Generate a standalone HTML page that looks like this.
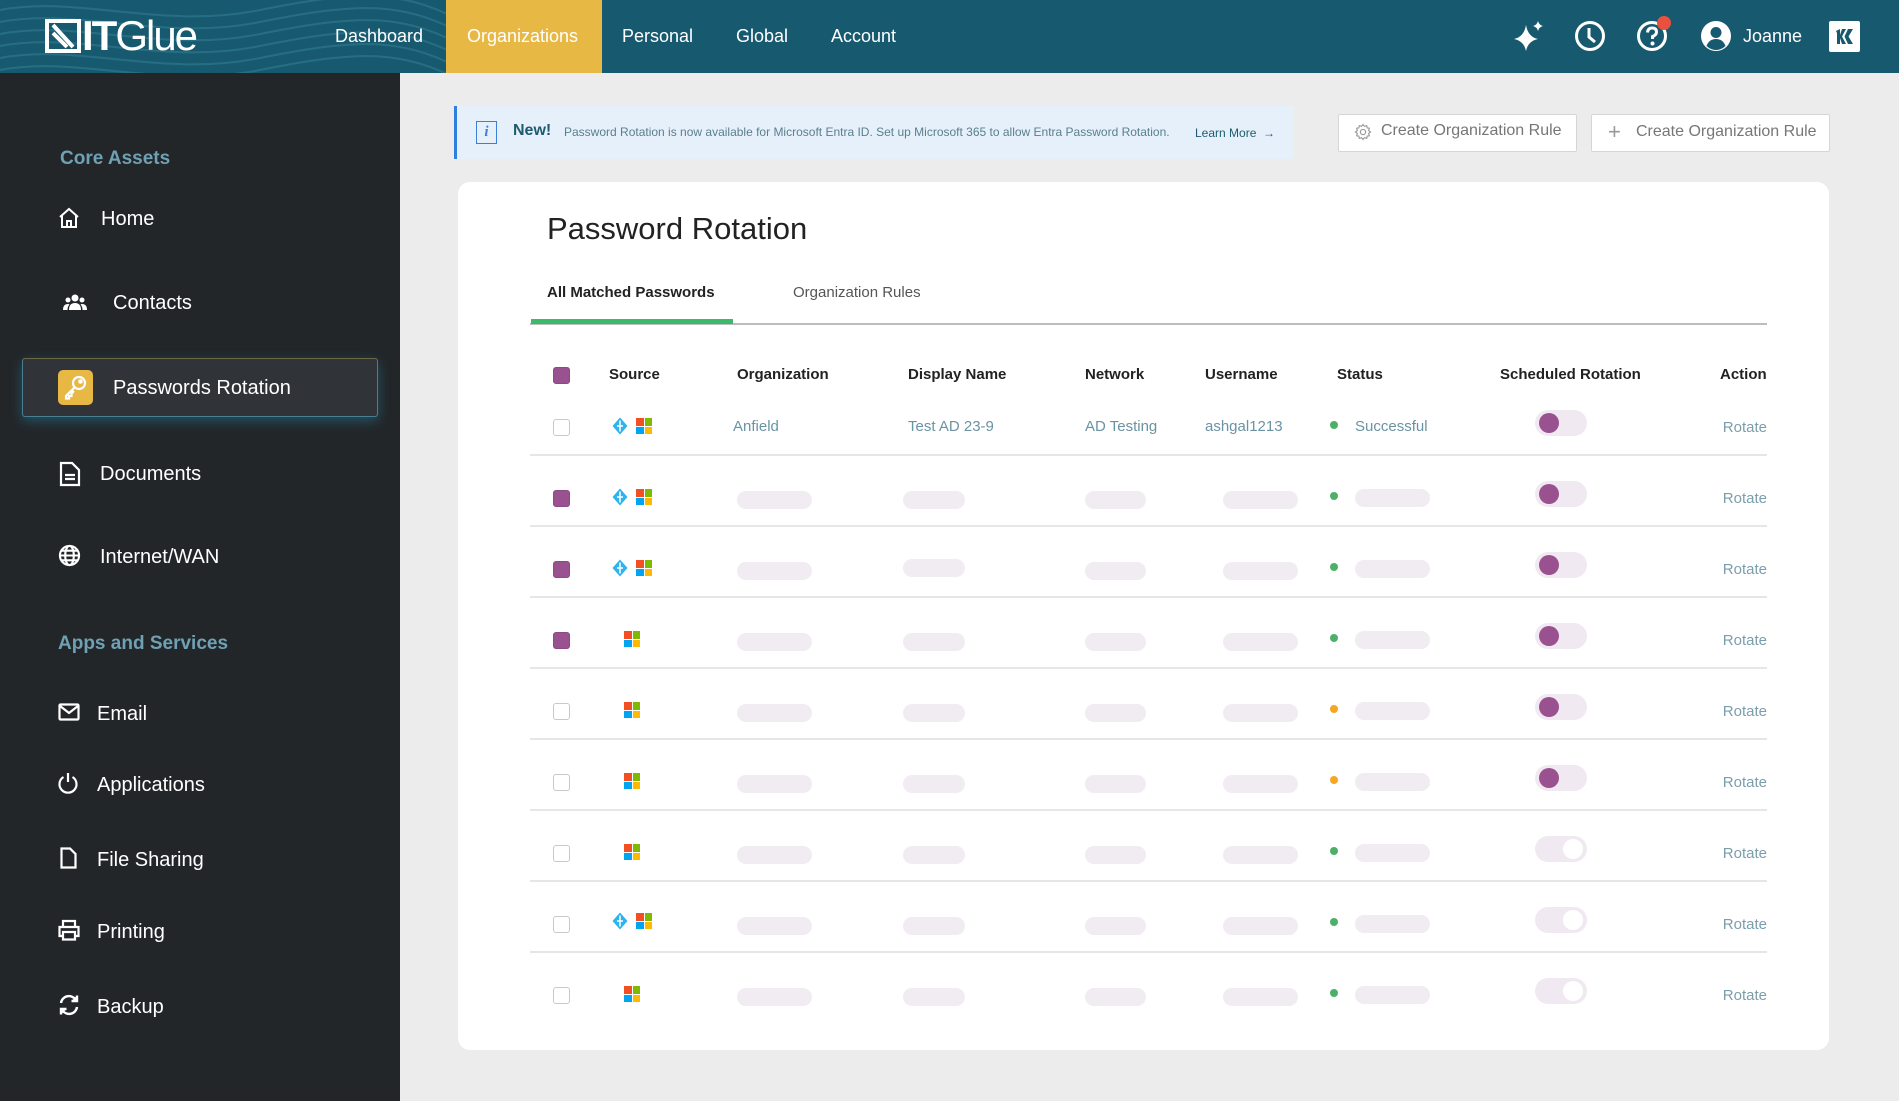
<!DOCTYPE html>
<html><head><meta charset="utf-8">
<style>
*{margin:0;padding:0;box-sizing:border-box}
body{width:1899px;height:1101px;overflow:hidden;background:#ececec;font-family:"Liberation Sans",sans-serif;position:relative}
.a{position:absolute}
.hdr{left:0;top:0;width:1899px;height:73px;background:#175a70}
.nav{top:0;height:73px;line-height:73px;color:#fff;font-size:18px}
.side{left:0;top:73px;width:400px;height:1028px;background:#222629}
.si{color:#fff;font-size:20px;line-height:24px}
.sh{color:#6fa0b4;font-size:19px;font-weight:bold;line-height:24px}
.ico{position:absolute}
.card{left:458px;top:182px;width:1371px;height:868px;background:#fff;border-radius:12px}
.th{top:365px;font-size:15px;font-weight:bold;color:#222;line-height:20px}
.row{position:absolute;left:0;width:1899px;height:1px}
.cb{position:absolute;left:553px;width:17px;height:17px;border-radius:3px;margin-top:-8px}
.cb.on{background:#9a5190;border:1px solid #8c4a84}
.cb.off{background:#fff;border:1.5px solid #c9c9c9}
.pill{position:absolute;height:18px;border-radius:9px;background:#f1ecf2;margin-top:-7px}
.dot{position:absolute;left:1330px;width:8px;height:8px;border-radius:50%;margin-top:-6px}
.tg{position:absolute;left:1535px;width:52px;height:26px;border-radius:13px;background:#f1e9f1;margin-top:-17px}
.tg i{position:absolute;left:4px;top:3px;width:20px;height:20px;border-radius:50%;background:#9a5190}
.tg.off i{left:28px;background:#fff}
.rot{position:absolute;right:132px;color:#7b9eab;font-size:15px;margin-top:-9px;line-height:20px}
.sep{position:absolute;left:530px;width:1237px;height:1.5px;background:#e6e6e6}
.txt{position:absolute;color:#6a93a3;font-size:15px;margin-top:-10px;line-height:20px}
.ms{position:absolute;width:16px;height:16px;margin-top:-9px}
.ms b{position:absolute;width:7.5px;height:7.5px}
.ad{position:absolute;width:16px;height:18px;margin-top:-10px}
</style></head><body>

<div class="a hdr">
<svg class="a" style="left:0;top:0" width="460" height="73">
<g fill="none" stroke="#2b7389" stroke-width="2" opacity=".8">
<path d="M0 10 C80 -5 160 30 260 10 S400 -10 460 20"/>
<path d="M0 22 C80 7 160 42 260 22 S400 2 460 32"/>
<path d="M0 34 C80 19 160 54 260 34 S400 14 460 44"/>
<path d="M0 46 C80 31 160 66 260 46 S400 26 460 56"/>
<path d="M0 58 C80 43 160 78 260 58 S400 38 460 68"/>
<path d="M0 70 C80 55 160 90 260 70 S400 50 460 80"/>
</g></svg>
<svg class="a" style="left:45px;top:19px" width="36" height="34" viewBox="0 0 36 34"><rect x="2" y="2" width="32" height="30" fill="none" stroke="#fff" stroke-width="4"/><path d="M8 6 L28 28 M8 14 L22 28" stroke="#fff" stroke-width="4"/></svg>
<div class="a" style="left:82px;top:10px;color:#fff;font-family:'Liberation Sans Narrow','Liberation Sans',sans-serif;font-size:42px;line-height:52px;letter-spacing:-2px"><b>IT</b>Glue</div>
<div class="a" style="left:446px;top:0;width:156px;height:73px;background:#e8b844"></div>
<div class="a nav" style="left:335px">Dashboard</div>
<div class="a nav" style="left:467px">Organizations</div>
<div class="a nav" style="left:622px">Personal</div>
<div class="a nav" style="left:736px">Global</div>
<div class="a nav" style="left:831px">Account</div>
<svg class="a" style="left:1513px;top:20px" width="32" height="32" viewBox="0 0 32 32"><path d="M13 5 Q15 17 25 19 Q15 21 13 31 Q11 21 1 19 Q11 17 13 5Z" fill="#fff"/><path d="M25 1 Q26 5 30 6 Q26 7 25 11 Q24 7 20 6 Q24 5 25 1Z" fill="#fff"/></svg>
<svg class="a" style="left:1574px;top:20px" width="32" height="32" viewBox="0 0 32 32"><circle cx="16" cy="16" r="13.5" fill="none" stroke="#fff" stroke-width="3"/><path d="M15 8 V17 L21 22" fill="none" stroke="#fff" stroke-width="3"/></svg>
<svg class="a" style="left:1636px;top:20px" width="32" height="32" viewBox="0 0 32 32"><circle cx="16" cy="16" r="13.5" fill="none" stroke="#fff" stroke-width="3"/><path d="M11.5 12.5 Q12 8 16 8 Q20.5 8 20.5 12 Q20.5 15 16.5 16.5 V19" fill="none" stroke="#fff" stroke-width="3"/><circle cx="16.5" cy="23.5" r="2" fill="#fff"/></svg>
<div class="a" style="left:1657px;top:16px;width:14px;height:14px;border-radius:50%;background:#e8513e"></div>
<svg class="a" style="left:1700px;top:20px" width="32" height="32" viewBox="0 0 32 32"><circle cx="16" cy="16" r="15" fill="#fff"/><circle cx="16" cy="12.5" r="5.5" fill="#175a70"/><path d="M6.5 26 Q9 19 16 19 Q23 19 25.5 26 Q21 30 16 30 Q11 30 6.5 26Z" fill="#175a70"/></svg>
<div class="a nav" style="left:1743px">Joanne</div>
<div class="a" style="left:1829px;top:21px;width:31px;height:31px;background:#fff;border-radius:2px"><svg width="31" height="31" viewBox="0 0 31 31"><path d="M7 10 L11 8 V23 H8 V12Z M13 8 H17 L13 15.5 L17 23 H13 L10.5 15.5Z M19 8 H24 L19.5 15.5 L24 23 H19 L15.5 15.5Z" fill="#175a70"/></svg></div>
</div>

<div class="a side">
<div class="a sh" style="left:60px;top:74px">Core Assets</div>
<svg class="ico" style="left:57px;top:133px" width="24" height="24" viewBox="0 0 24 24" fill="none" stroke="#fff" stroke-width="2"><path d="M3 11 L12 3 L21 11 M5 9.5 V21 H19 V9.5 M10 21 V15 H14 V21"/></svg>
<div class="a si" style="left:101px;top:134px">Home</div>
<svg class="ico" style="left:63px;top:220px" width="24" height="20" viewBox="0 0 24 20" fill="#fff"><circle cx="12" cy="5" r="3.5"/><circle cx="5" cy="7" r="2.5"/><circle cx="19" cy="7" r="2.5"/><path d="M6 17 Q6 10 12 10 Q18 10 18 17Z M0 17 Q0 11 5 11 Q6 11 6.5 11.5 Q4.5 13.5 4.5 17Z M24 17 Q24 11 19 11 Q18 11 17.5 11.5 Q19.5 13.5 19.5 17Z"/></svg>
<div class="a si" style="left:113px;top:218px">Contacts</div>
<div class="a" style="left:22px;top:285px;width:356px;height:59px;background:#303438;border:1.5px solid #4a7f93;border-top-color:#6c6a45;border-radius:3px;box-shadow:0 4px 12px rgba(40,140,170,.45)"></div>
<div class="a" style="left:58px;top:297px;width:35px;height:35px;border-radius:5px;background:#e8b844"><svg width="35" height="35" viewBox="0 0 35 35" fill="none" stroke="#fff" stroke-width="2.2"><circle cx="21" cy="13" r="6"/><circle cx="22.5" cy="11.5" r="1.2" fill="#fff"/><path d="M16.5 17.5 L8 26 V28.5 H11 V26 H13.5 V23.5 L16 21"/></svg></div>
<div class="a si" style="left:113px;top:303px">Passwords Rotation</div>
<svg class="ico" style="left:59px;top:388px" width="22" height="26" viewBox="0 0 22 26" fill="none" stroke="#fff" stroke-width="2.2"><path d="M2 2 H13 L20 9 V24 H2Z M6 14 H16 M6 18 H16"/></svg>
<div class="a si" style="left:100px;top:389px">Documents</div>
<svg class="ico" style="left:58px;top:471px" width="23" height="23" viewBox="0 0 24 24" fill="none" stroke="#fff" stroke-width="2.2"><circle cx="12" cy="12" r="10"/><ellipse cx="12" cy="12" rx="4.5" ry="10"/><path d="M2 12 H22 M3.5 7 H20.5 M3.5 17 H20.5"/></svg>
<div class="a si" style="left:100px;top:472px">Internet/WAN</div>
<div class="a sh" style="left:58px;top:559px">Apps and Services</div>
<svg class="ico" style="left:58px;top:630px" width="22" height="18" viewBox="0 0 22 18" fill="none" stroke="#fff" stroke-width="2.2"><rect x="1.5" y="1.5" width="19" height="15" rx="1"/><path d="M2 3 L11 10 L20 3"/></svg>
<div class="a si" style="left:97px;top:629px">Email</div>
<svg class="ico" style="left:57px;top:699px" width="22" height="22" viewBox="0 0 22 22" fill="none" stroke="#fff" stroke-width="2.2"><path d="M6.5 5 A8.5 8.5 0 1 0 15.5 5 M11 1 V10"/></svg>
<div class="a si" style="left:97px;top:700px">Applications</div>
<svg class="ico" style="left:60px;top:774px" width="17" height="22" viewBox="0 0 17 22" fill="none" stroke="#fff" stroke-width="2.2"><path d="M1.5 1.5 H10 L15.5 7 V20.5 H1.5Z"/></svg>
<div class="a si" style="left:97px;top:775px">File Sharing</div>
<svg class="ico" style="left:58px;top:846px" width="22" height="22" viewBox="0 0 22 22" fill="none" stroke="#fff" stroke-width="2.2"><path d="M5 7 V2 H17 V7 M4 17 H1.5 V8 H20.5 V17 H18 M5 13 H17 V20.5 H5Z"/></svg>
<div class="a si" style="left:97px;top:847px">Printing</div>
<svg class="ico" style="left:58px;top:921px" width="22" height="22" viewBox="0 0 22 22" fill="none" stroke="#fff" stroke-width="2.4"><path d="M3 9 A8 8 0 0 1 17.5 5.5 M19 13 A8 8 0 0 1 4.5 16.5"/><path d="M19 1.5 V7 H13.5 M3 20.5 V15 H8.5" fill="#fff"/></svg>
<div class="a si" style="left:97px;top:922px">Backup</div>
</div>

<div class="a" style="left:454px;top:106px;width:840px;height:53px;background:#e6f0fb;border-left:3px solid #2f7fe0"></div>
<div class="a" style="left:476px;top:121px;width:21px;height:23px;border:1.5px solid #3b7fd8;color:#3b7fd8;font:italic bold 15px 'Liberation Serif',serif;text-align:center;line-height:20px">i</div>
<div class="a" style="left:513px;top:122px;color:#1f5a6e;font-size:16px;font-weight:bold">New!</div>
<div class="a" style="left:564px;top:125px;color:#5a7f8e;font-size:12px">Password Rotation is now available for Microsoft Entra ID. Set up Microsoft 365 to allow Entra Password Rotation.</div>
<div class="a" style="left:1195px;top:126px;color:#1f5a6e;font-size:12px">Learn More &nbsp;&rarr;</div>

<div class="a" style="left:1338px;top:114px;width:239px;height:38px;background:#fff;border:1.5px solid #d6d6d6;border-radius:2px"></div>
<svg class="a" style="left:1354px;top:123px" width="18" height="18" viewBox="0 0 24 24" fill="none" stroke="#999" stroke-width="1.5"><circle cx="12" cy="12" r="3.5"/><path d="M12 2 L14 4.5 L17 3.5 L17.5 6.5 L20.5 7 L19.5 10 L22 12 L19.5 14 L20.5 17 L17.5 17.5 L17 20.5 L14 19.5 L12 22 L10 19.5 L7 20.5 L6.5 17.5 L3.5 17 L4.5 14 L2 12 L4.5 10 L3.5 7 L6.5 6.5 L7 3.5 L10 4.5Z"/></svg>
<div class="a" style="left:1381px;top:122px;color:#777;font-size:16px">Create Organization Rule</div>
<div class="a" style="left:1591px;top:114px;width:239px;height:38px;background:#fff;border:1.5px solid #d6d6d6;border-radius:2px"></div>
<div class="a" style="left:1608px;top:119px;color:#999;font-size:22px;font-weight:300">+</div>
<div class="a" style="left:1636px;top:123px;color:#777;font-size:16px">Create Organization Rule</div>

<div class="a card"></div>
<div class="a" style="left:547px;top:211px;font-size:31px;color:#222">Password Rotation</div>
<div class="a" style="left:547px;top:284px;font-size:15px;font-weight:bold;color:#222">All Matched Passwords</div>
<div class="a" style="left:793px;top:284px;font-size:15px;color:#555">Organization Rules</div>
<div class="a" style="left:530px;top:323px;width:1237px;height:1.5px;background:#bdbdbd"></div>
<div class="a" style="left:531px;top:319px;width:202px;height:5px;background:#3cb96a"></div>

<div class="cb on" style="top:375px"></div>
<div class="a th" style="left:609px">Source</div>
<div class="a th" style="left:737px">Organization</div>
<div class="a th" style="left:908px">Display Name</div>
<div class="a th" style="left:1085px">Network</div>
<div class="a th" style="left:1205px">Username</div>
<div class="a th" style="left:1337px">Status</div>
<div class="a th" style="left:1500px">Scheduled Rotation</div>
<div class="a th" style="left:1720px">Action</div>

<div class="sep" style="top:454px"></div><div class="sep" style="top:525px"></div><div class="sep" style="top:596px"></div><div class="sep" style="top:667px"></div><div class="sep" style="top:738px"></div><div class="sep" style="top:809px"></div><div class="sep" style="top:880px"></div><div class="sep" style="top:951px"></div>

<div class="row" style="top:427px">
<div class="cb off"></div>
<svg class="ad" style="left:612px" viewBox="0 0 16 18"><path d="M8 0.5 L15.5 9 L8 17.5 L0.5 9Z" fill="#2fb3ee"/><path d="M8 3.5 V14.5 M5 9 H11" stroke="#fff" stroke-width="1.5"/></svg>
<div class="ms" style="left:636px"><b style="left:0;top:0;background:#f25022"></b><b style="left:8.5px;top:0;background:#7fba00"></b><b style="left:0;top:8.5px;background:#00a4ef"></b><b style="left:8.5px;top:8.5px;background:#ffb900"></b></div>
<div class="txt" style="left:733px">Anfield</div>
<div class="txt" style="left:908px">Test AD 23-9</div>
<div class="txt" style="left:1085px">AD Testing</div>
<div class="txt" style="left:1205px">ashgal1213</div>
<div class="dot" style="background:#4caf6a"></div>
<div class="txt" style="left:1355px">Successful</div>
<div class="tg"><i></i></div>
<div class="rot">Rotate</div>
</div>

<div class="row" style="top:498px">
<div class="cb on"></div>
<svg class="ad" style="left:612px" viewBox="0 0 16 18"><path d="M8 0.5 L15.5 9 L8 17.5 L0.5 9Z" fill="#2fb3ee"/><path d="M8 3.5 V14.5 M5 9 H11" stroke="#fff" stroke-width="1.5"/></svg>
<div class="ms" style="left:636px"><b style="left:0;top:0;background:#f25022"></b><b style="left:8.5px;top:0;background:#7fba00"></b><b style="left:0;top:8.5px;background:#00a4ef"></b><b style="left:8.5px;top:8.5px;background:#ffb900"></b></div>
<div class="pill" style="left:737px;width:75px"></div><div class="pill" style="left:903px;width:62px"></div><div class="pill" style="left:1085px;width:61px"></div><div class="pill" style="left:1223px;width:75px"></div>
<div class="dot" style="background:#4caf6a"></div>
<div class="pill" style="left:1355px;width:75px;margin-top:-9px"></div>
<div class="tg"><i></i></div>
<div class="rot">Rotate</div>
</div>

<div class="row" style="top:569px">
<div class="cb on"></div>
<svg class="ad" style="left:612px" viewBox="0 0 16 18"><path d="M8 0.5 L15.5 9 L8 17.5 L0.5 9Z" fill="#2fb3ee"/><path d="M8 3.5 V14.5 M5 9 H11" stroke="#fff" stroke-width="1.5"/></svg>
<div class="ms" style="left:636px"><b style="left:0;top:0;background:#f25022"></b><b style="left:8.5px;top:0;background:#7fba00"></b><b style="left:0;top:8.5px;background:#00a4ef"></b><b style="left:8.5px;top:8.5px;background:#ffb900"></b></div>
<div class="pill" style="left:737px;width:75px"></div><div class="pill" style="left:903px;width:62px;margin-top:-10px"></div><div class="pill" style="left:1085px;width:61px"></div><div class="pill" style="left:1223px;width:75px"></div>
<div class="dot" style="background:#4caf6a"></div>
<div class="pill" style="left:1355px;width:75px;margin-top:-9px"></div>
<div class="tg"><i></i></div>
<div class="rot">Rotate</div>
</div>

<div class="row" style="top:640px">
<div class="cb on"></div>
<div class="ms" style="left:624px"><b style="left:0;top:0;background:#f25022"></b><b style="left:8.5px;top:0;background:#7fba00"></b><b style="left:0;top:8.5px;background:#00a4ef"></b><b style="left:8.5px;top:8.5px;background:#ffb900"></b></div>
<div class="pill" style="left:737px;width:75px"></div><div class="pill" style="left:903px;width:62px"></div><div class="pill" style="left:1085px;width:61px"></div><div class="pill" style="left:1223px;width:75px"></div>
<div class="dot" style="background:#4caf6a"></div>
<div class="pill" style="left:1355px;width:75px;margin-top:-9px"></div>
<div class="tg"><i></i></div>
<div class="rot">Rotate</div>
</div>

<div class="row" style="top:711px">
<div class="cb off"></div>
<div class="ms" style="left:624px"><b style="left:0;top:0;background:#f25022"></b><b style="left:8.5px;top:0;background:#7fba00"></b><b style="left:0;top:8.5px;background:#00a4ef"></b><b style="left:8.5px;top:8.5px;background:#ffb900"></b></div>
<div class="pill" style="left:737px;width:75px"></div><div class="pill" style="left:903px;width:62px"></div><div class="pill" style="left:1085px;width:61px"></div><div class="pill" style="left:1223px;width:75px"></div>
<div class="dot" style="background:#f5a623"></div>
<div class="pill" style="left:1355px;width:75px;margin-top:-9px"></div>
<div class="tg"><i></i></div>
<div class="rot">Rotate</div>
</div>

<div class="row" style="top:782px">
<div class="cb off"></div>
<div class="ms" style="left:624px"><b style="left:0;top:0;background:#f25022"></b><b style="left:8.5px;top:0;background:#7fba00"></b><b style="left:0;top:8.5px;background:#00a4ef"></b><b style="left:8.5px;top:8.5px;background:#ffb900"></b></div>
<div class="pill" style="left:737px;width:75px"></div><div class="pill" style="left:903px;width:62px"></div><div class="pill" style="left:1085px;width:61px"></div><div class="pill" style="left:1223px;width:75px"></div>
<div class="dot" style="background:#f5a623"></div>
<div class="pill" style="left:1355px;width:75px;margin-top:-9px"></div>
<div class="tg"><i></i></div>
<div class="rot">Rotate</div>
</div>

<div class="row" style="top:853px">
<div class="cb off"></div>
<div class="ms" style="left:624px"><b style="left:0;top:0;background:#f25022"></b><b style="left:8.5px;top:0;background:#7fba00"></b><b style="left:0;top:8.5px;background:#00a4ef"></b><b style="left:8.5px;top:8.5px;background:#ffb900"></b></div>
<div class="pill" style="left:737px;width:75px"></div><div class="pill" style="left:903px;width:62px"></div><div class="pill" style="left:1085px;width:61px"></div><div class="pill" style="left:1223px;width:75px"></div>
<div class="dot" style="background:#4caf6a"></div>
<div class="pill" style="left:1355px;width:75px;margin-top:-9px"></div>
<div class="tg off"><i></i></div>
<div class="rot">Rotate</div>
</div>

<div class="row" style="top:924px">
<div class="cb off"></div>
<svg class="ad" style="left:612px;margin-top:-12px" viewBox="0 0 16 18"><path d="M8 0.5 L15.5 9 L8 17.5 L0.5 9Z" fill="#2fb3ee"/><path d="M8 3.5 V14.5 M5 9 H11" stroke="#fff" stroke-width="1.5"/></svg>
<div class="ms" style="left:636px;margin-top:-11px"><b style="left:0;top:0;background:#f25022"></b><b style="left:8.5px;top:0;background:#7fba00"></b><b style="left:0;top:8.5px;background:#00a4ef"></b><b style="left:8.5px;top:8.5px;background:#ffb900"></b></div>
<div class="pill" style="left:737px;width:75px"></div><div class="pill" style="left:903px;width:62px"></div><div class="pill" style="left:1085px;width:61px"></div><div class="pill" style="left:1223px;width:75px"></div>
<div class="dot" style="background:#4caf6a"></div>
<div class="pill" style="left:1355px;width:75px;margin-top:-9px"></div>
<div class="tg off"><i></i></div>
<div class="rot">Rotate</div>
</div>

<div class="row" style="top:995px">
<div class="cb off"></div>
<div class="ms" style="left:624px"><b style="left:0;top:0;background:#f25022"></b><b style="left:8.5px;top:0;background:#7fba00"></b><b style="left:0;top:8.5px;background:#00a4ef"></b><b style="left:8.5px;top:8.5px;background:#ffb900"></b></div>
<div class="pill" style="left:737px;width:75px"></div><div class="pill" style="left:903px;width:62px"></div><div class="pill" style="left:1085px;width:61px"></div><div class="pill" style="left:1223px;width:75px"></div>
<div class="dot" style="background:#4caf6a"></div>
<div class="pill" style="left:1355px;width:75px;margin-top:-9px"></div>
<div class="tg off"><i></i></div>
<div class="rot">Rotate</div>
</div>

</body></html>
